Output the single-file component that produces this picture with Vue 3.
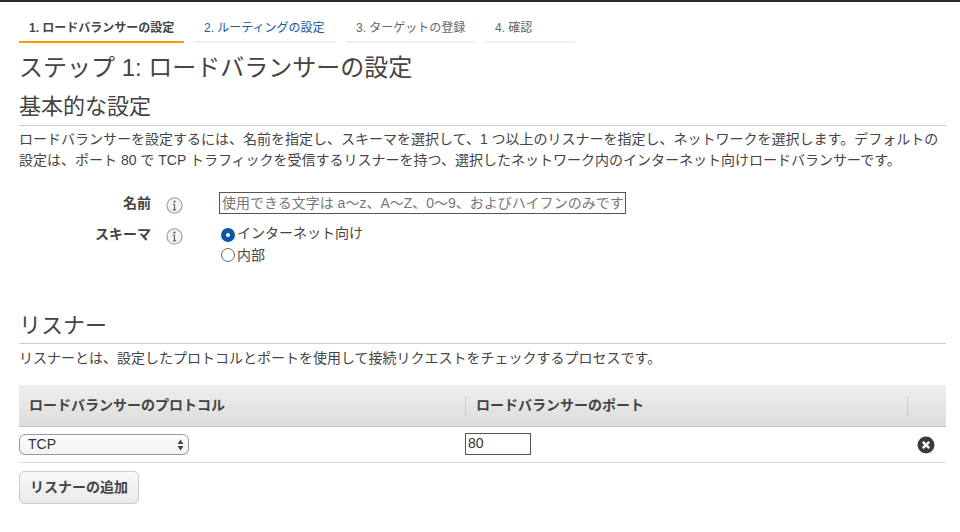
<script setup>
const tabs = [
  { label: '1. ロードバランサーの設定', cls: 'active', width: '165px' },
  { label: '2. ルーティングの設定', cls: 'link', width: '142px' },
  { label: '3. ターゲットの登録', cls: '', width: '129px' },
  { label: '4. 確認', cls: '', width: '90px' },
]
</script>

<template>
  <div class="page">
    <nav class="tabs">
      <div v-for="t in tabs" :key="t.label" class="tab" :class="t.cls" :style="{ width: t.width }">{{ t.label }}</div>
    </nav>
    <h1>ステップ 1: ロードバランサーの設定</h1>
    <h2 class="first">基本的な設定</h2>
    <p class="desc two">ロードバランサーを設定するには、名前を指定し、スキーマを選択して、1 つ以上のリスナーを指定し、ネットワークを選択します。デフォルトの設定は、ポート 80 で TCP トラフィックを受信するリスナーを持つ、選択したネットワーク内のインターネット向けロードバランサーです。</p>
    <div class="form">
      <div class="row name-row">
        <div class="label">名前</div>
        <svg class="info" viewBox="0 0 18 18" width="17" height="17"><circle cx="9" cy="9" r="8" fill="#f6f6f6" stroke="#a8a8a8" stroke-width="1.4" /><circle cx="9" cy="5" r="1.2" fill="#666" /><path d="M9 7.6V13.6M7.4 7.9H9M7.2 13.6H10.8" fill="none" stroke="#666" stroke-width="1.3" /></svg>
        <div class="text-input placeholder">使用できる文字は a〜z、A〜Z、0〜9、およびハイフンのみです</div>
      </div>
      <div class="row schema-row">
        <div class="label">スキーマ</div>
        <svg class="info" viewBox="0 0 18 18" width="17" height="17"><circle cx="9" cy="9" r="8" fill="#f6f6f6" stroke="#a8a8a8" stroke-width="1.4" /><circle cx="9" cy="5" r="1.2" fill="#666" /><path d="M9 7.6V13.6M7.4 7.9H9M7.2 13.6H10.8" fill="none" stroke="#666" stroke-width="1.3" /></svg>
        <div class="radios">
          <div class="radio-line"><span class="radio on"></span>インターネット向け</div>
          <div class="radio-line"><span class="radio off"></span>内部</div>
        </div>
      </div>
    </div>
    <h2 class="second">リスナー</h2>
    <p class="desc single">リスナーとは、設定したプロトコルとポートを使用して接続リクエストをチェックするプロセスです。</p>
    <div class="thead">
      <div class="th c1">ロードバランサーのプロトコル</div>
      <div class="th c2">ロードバランサーのポート</div>
      <div class="th c3"></div>
    </div>
    <div class="tbody">
      <div class="c1 cell"><div class="select"><span class="sel-text">TCP</span><svg viewBox="0 0 7 12" width="7" height="12"><path d="M3.5 0.5L6.5 5H0.5ZM3.5 11.5L0.5 7H6.5Z" fill="#444" /></svg></div></div>
      <div class="c2 cell"><div class="port">80</div></div>
      <div class="c3 cell"><svg viewBox="0 0 18 18" width="18" height="18"><circle cx="9" cy="9" r="8.5" fill="#3b3b3b" /><path d="M5.8 5.8L12.2 12.2M12.2 5.8L5.8 12.2" stroke="#fff" stroke-width="2.4" /></svg></div>
    </div>
    <button class="add" type="button">リスナーの追加</button>
  </div>
</template>

<style>
html, body { margin: 0; background: #fff; }
</style>

<style scoped>
.page {
  width: 960px;
  height: 532px;
  box-sizing: border-box;
  border-top: 2px solid #2b2b2b;
  padding: 0 14px 0 19px;
  overflow: hidden;
  color: #444;
  font-family: "Liberation Sans", "Noto Sans CJK JP", sans-serif;
  font-size: 14px;
}
.tabs { display: flex; gap: 10px; height: 41px; }
.tab {
  box-sizing: border-box;
  height: 41px;
  padding: 18px 0 0 10px;
  line-height: 16px;
  font-size: 12px;
  color: #666;
  border-bottom: 2px solid #eee;
  white-space: nowrap;
}
.tab.active { color: #444; font-weight: bold; border-bottom-color: #f90; }
.tab.link { color: #15589e; }
h1 {
  margin: 10px 0 0;
  font-size: 24px;
  line-height: 30px;
  font-weight: 400;
  color: #444;
  white-space: nowrap;
}
h2 {
  margin: 0;
  font-size: 22px;
  line-height: 30px;
  font-weight: 400;
  color: #444;
  padding-bottom: 3px;
  border-bottom: 1px solid #ccc;
  white-space: nowrap;
}
h2.first { margin-top: 9px; }
h2.second { margin-top: 0; padding-bottom: 2px; }
.desc {
  margin: 3px 0 0;
  line-height: 22px;
  font-size: 14px;
  width: 927px;
}
.desc.two { line-height: 21px; }
.desc.single { white-space: nowrap; }
.form { margin-top: 21px; height: 119px; }
.row { display: flex; align-items: flex-start; }
.label {
  width: 132px;
  text-align: right;
  font-weight: bold;
  font-size: 14px;
  line-height: 22px;
}
.info { margin: 5px 0 0 15px; flex: none; }
.name-row .text-input { margin-left: 36px; }
.schema-row { margin-top: 9px; }
.text-input {
  box-sizing: border-box;
  width: 407px;
  height: 22px;
  border: 1px solid #555;
  padding: 0 2px;
  line-height: 20px;
  font-size: 14px;
  white-space: nowrap;
  overflow: hidden;
}
.placeholder { color: #777; }
.radios { margin: -1px 0 0 38px; }
.radio-line { display: flex; align-items: flex-start; height: 22px; line-height: 22px; font-size: 14px; }
.radio {
  box-sizing: border-box;
  width: 14px;
  height: 14px;
  margin: 6px 2px 0 0;
  border-radius: 50%;
  background: #fff;
  flex: none;
}
.radio.on { border: 5px solid #0b58a8; }
.radio.off { border: 1.5px solid #666; margin-top: 4px; }
.thead {
  margin-top: 16px;
  display: flex;
  height: 41px;
  align-items: center;
  background: linear-gradient(#eee, #ddd);
  border-bottom: 1px solid #c6c6c6;
  font-weight: bold;
  font-size: 14px;
}
.c1 { width: 446px; box-sizing: border-box; flex: none; }
.c2 { width: 442px; box-sizing: border-box; flex: none; }
.c3 { flex: 1; }
.th { height: 20px; line-height: 18px; }
.th.c1 { padding-left: 10px; }
.th.c2 { border-left: 1px solid #ccc; padding-left: 10px; }
.th.c3 { border-left: 1px solid #ccc; }
.tbody {
  display: flex;
  align-items: center;
  height: 35px;
  border-bottom: 1px solid #ddd;
}
.select {
  box-sizing: border-box;
  width: 170px;
  height: 21px;
  border: 1px solid #999;
  border-radius: 6px;
  background: linear-gradient(#fcfcfc, #f2f2f2);
  padding: 0 4px 0 8px;
  display: flex;
  align-items: center;
  justify-content: space-between;
  color: #333;
  font-size: 14px;
}
.sel-text { margin-bottom: 2px; }
.port {
  box-sizing: border-box;
  width: 66px;
  height: 22px;
  margin-bottom: 1px;
  border: 1px solid #555;
  padding-left: 2px;
  line-height: 19px;
  font-size: 14px;
  color: #333;
}
.c3.cell { display: flex; padding-left: 10px; }
.add {
  display: block;
  margin-top: 8px;
  width: 120px;
  height: 33px;
  padding: 0 0 4px;
  border: 1px solid #ccc;
  border-radius: 5px;
  background: linear-gradient(#f8f8f8, #e9e9e9);
  color: #444;
  font-family: inherit;
  font-weight: bold;
  font-size: 14px;
}
</style>
